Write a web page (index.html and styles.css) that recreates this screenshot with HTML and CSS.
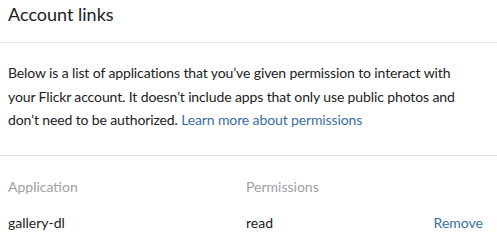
FILE: index.html
```html
<!DOCTYPE html>
<html>
<head>
<meta charset="utf-8">
<link rel="stylesheet" href="styles.css">
</head>
<body>
<div class="page">
  <h2 class="title">Account links</h2>
  <div class="intro">
    <p>Below is a list of applications that you’ve given permission to interact with your Flickr account. It doesn’t include apps that only use public photos and don’t need to be authorized. <a href="#" class="link">Learn more about permissions</a></p>
  </div>
  <div class="apps">
    <div class="row head">
      <div class="col-app">Application</div>
      <div class="col-perm">Permissions</div>
      <div class="col-act"></div>
    </div>
    <div class="row">
      <div class="col-app">gallery-dl</div>
      <div class="col-perm">read</div>
      <div class="col-act"><a href="#" class="link">Remove</a></div>
    </div>
  </div>
</div>
</body>
</html>
```
FILE: styles.css
```css
html, body {
  margin: 0;
  padding: 0;
  background: #fff;
}
body {
  font-family: Lato, "Open Sans", sans-serif;
  color: #212124;
}
.title {
  margin: 0;
  padding: 3px 8px 0;
  height: 39px;
  font-size: 18px;
  font-weight: 400;
  line-height: 22px;
  border-bottom: 1px solid #e2e2e2;
}
.intro {
  padding: 18px 30px 23px 8px;
  border-bottom: 1px solid #e2e2e2;
}
.intro p {
  margin: 0;
  font-size: 14px;
  line-height: 23.5px;
  letter-spacing: -0.12px;
}
.link {
  color: #3a6ea5;
  text-decoration: none;
}
.apps {
  padding: 21px 14px 0 8px;
  font-size: 14px;
}
.row {
  display: grid;
  grid-template-columns: 238px 1fr auto;
  line-height: 20px;
}
.row.head {
  color: #a0a0a4;
  margin-bottom: 16px;
}
.col-act {
  text-align: right;
}
```
